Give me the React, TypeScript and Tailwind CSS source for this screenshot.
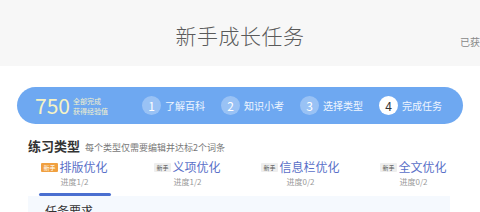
const font = { fontFamily: '"Noto Sans CJK SC", "Liberation Sans", sans-serif' };

const steps = [
  { n: 1, label: '了解百科' },
  { n: 2, label: '知识小考' },
  { n: 3, label: '选择类型' },
  { n: 4, label: '完成任务', active: true },
];

const tabs = [
  { name: '排版优化', progress: '进度1/2', active: true },
  { name: '义项优化', progress: '进度1/2' },
  { name: '信息栏优化', progress: '进度0/2' },
  { name: '全文优化', progress: '进度0/2' },
];

export default function App() {
  return (
    <div
      className="h-[212px] w-[480px] overflow-hidden whitespace-nowrap bg-white"
      style={font}
    >
      <header className="relative flex h-[66px] items-center justify-center bg-[#f7f7f7]">
        <h1 className="mt-[4px] text-[21px] font-light leading-none tracking-[0.5px] text-[#5a5a5a]">
          新手成长任务
        </h1>
        <span className="absolute left-[460px] top-[37px] text-[10px] leading-none text-[#888]">
          已获
        </span>
      </header>

      <div className="mx-[17px] mt-[21px] flex h-[37px] items-center rounded-full bg-[#6ea8f1] pl-[18px]">
        <span className="text-[21px] leading-none text-[#f6f3c4]">750</span>
        <div className="ml-[3px] flex flex-col text-[7px] leading-[10px] text-[#f3f0cc]">
          <span>全部完成</span>
          <span>获得经验值</span>
        </div>
        <div className="ml-[34px] flex items-center gap-[16px]">
          {steps.map((s) => (
            <div key={s.n} className="flex items-center gap-[4px]">
              <span
                className={
                  s.active
                    ? 'flex h-[19px] w-[19px] items-center justify-center rounded-full bg-white text-[12px] leading-none text-[#333]'
                    : 'flex h-[19px] w-[19px] items-center justify-center rounded-full bg-white/30 text-[12px] leading-none text-white'
                }
              >
                {s.n}
              </span>
              <span className="w-[40px] text-[10px] leading-none text-white/90">{s.label}</span>
            </div>
          ))}
        </div>
      </div>

      <div className="ml-[28px] mt-[15px] flex items-baseline gap-[5px]">
        <span className="text-[13px] font-bold leading-none text-[#333]">练习类型</span>
        <span className="text-[9px] leading-none text-[#777]">每个类型仅需要编辑并达标2个词条</span>
      </div>

      <div className="ml-[18px] mt-[9px] grid w-[452px] grid-cols-4">
        {tabs.map((t) => (
          <div key={t.name} className="flex flex-col items-center">
            <div className="flex items-center gap-[2px]">
              <span
                className={
                  t.active
                    ? 'rounded-[1px] bg-[#f0a040] px-[2px] text-[6px] leading-[9px] text-white'
                    : 'rounded-[1px] bg-[#eee] px-[2px] text-[6px] leading-[9px] text-[#555]'
                }
              >
                新手
              </span>
              <span className="text-[12px] leading-none text-[#5a70c8]">{t.name}</span>
            </div>
            <span className="mt-[5px] text-[8px] leading-none text-[#999]">{t.progress}</span>
            <div
              className={
                t.active
                  ? 'mt-[7px] h-[3px] w-[72px] rounded-full bg-[#4a6fd0]'
                  : 'mt-[7px] h-[3px] w-[72px]'
              }
            />
          </div>
        ))}
      </div>

      <div className="ml-[28px] mr-[30px] h-[20px] bg-[#f5f9fe] pl-[17px] pt-[1px]">
        <span className="text-[12px] leading-none text-[#333]">任务要求</span>
      </div>
    </div>
  );
}
